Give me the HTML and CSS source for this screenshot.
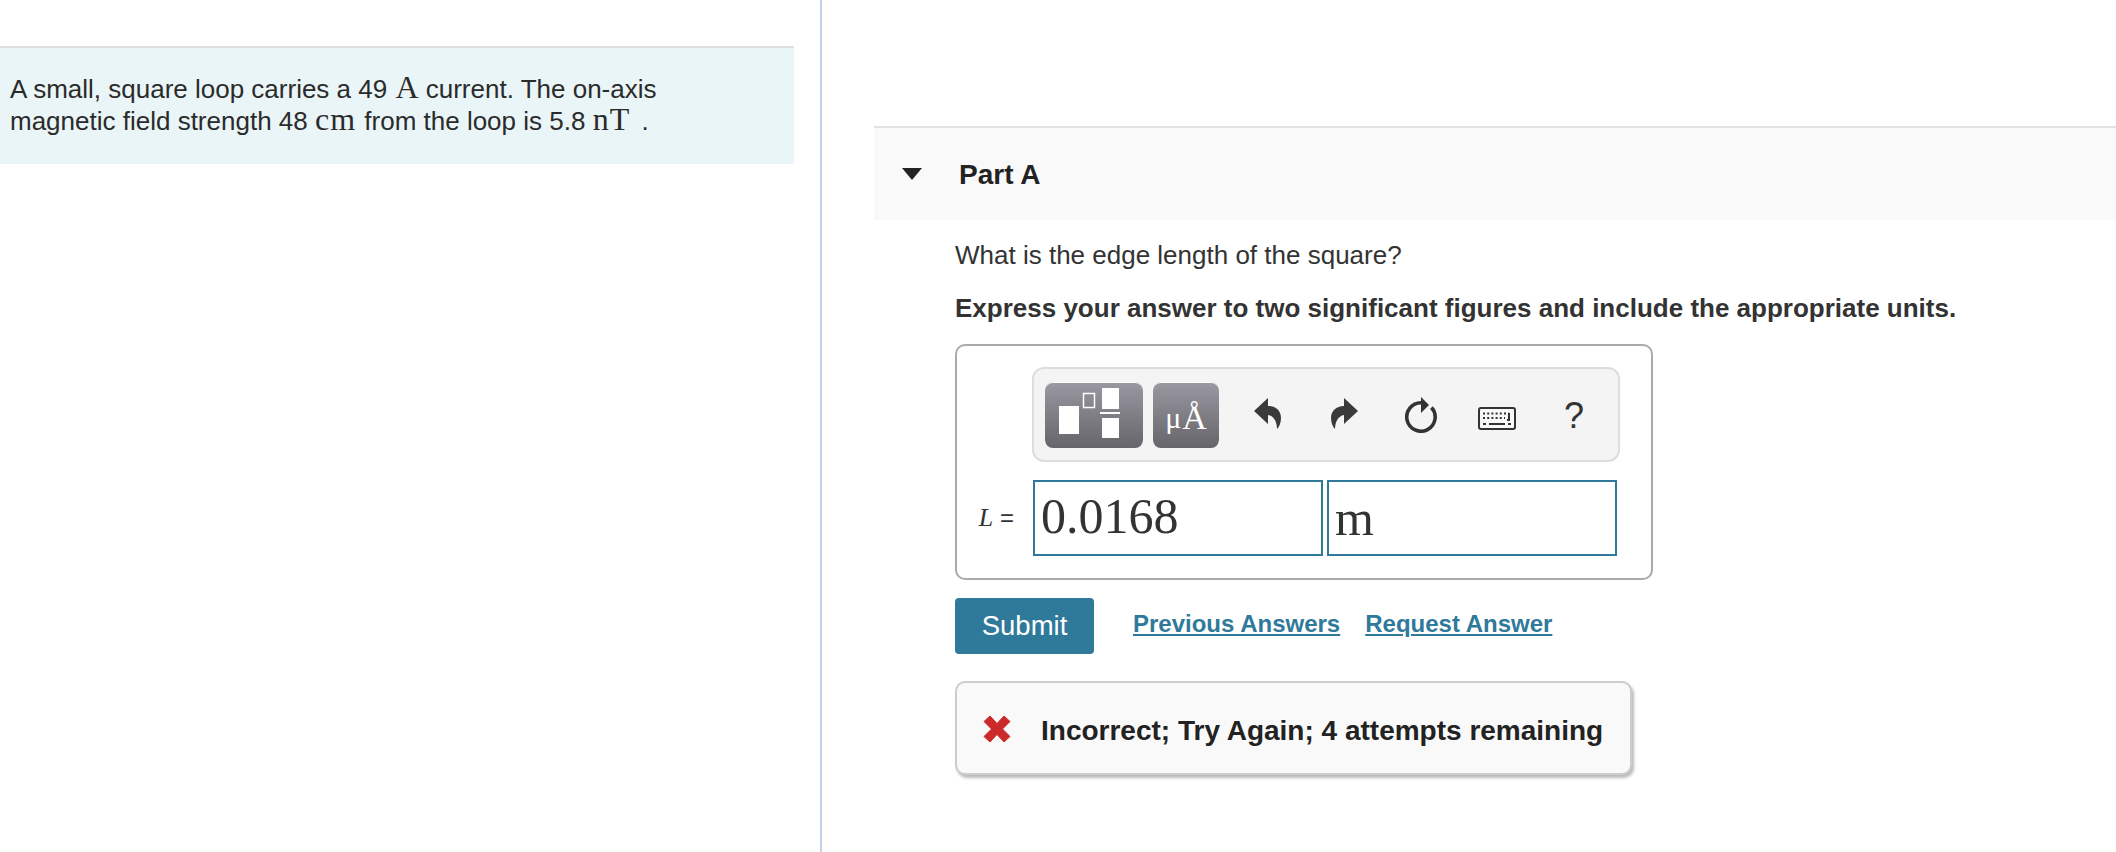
FILE: index.html
```html
<!DOCTYPE html>
<html lang="en">
<head>
  <meta charset="UTF-8">
  <title>Part A</title>
  <link rel="stylesheet" href="styles.css">
</head>
<body>

<div class="page">
  <div class="left-pane">
    <div class="intro">
      A small, square loop carries a 49 <span class="math math-a">A</span> current. The on-axis<br>
      magnetic field strength 48 <span class="math math-cm">cm</span> from the loop is 5.8 <span class="math math-nt">nT</span> .
    </div>
  </div>

  <div class="right-pane">
    <div class="part-head">
      <span class="caret"></span>
      <h2>Part A</h2>
    </div>

    <div class="part-body">
      <p class="question">What is the edge length of the square?</p>
      <p class="instruct">Express your answer to two significant figures and include the appropriate units.</p>

      <div class="answer-box">
        <div class="toolbar">
          <div class="tool-btn tool-templates">
            <svg width="98" height="66" viewBox="0 0 98 66">
              <rect x="14" y="24" width="20" height="28" fill="#fff"/>
              <rect x="38.5" y="11.5" width="11" height="14" fill="none" stroke="#fff" stroke-width="1.5"/>
              <rect x="57" y="6" width="17" height="21" fill="#fff"/>
              <rect x="55" y="30" width="20" height="2" fill="#fff"/>
              <rect x="57" y="36" width="17" height="20" fill="#fff"/>
            </svg>
          </div>
          <div class="tool-btn tool-units"><span class="mu">μ</span>Å</div>
          <svg class="ico ico-undo" width="27" height="31" viewBox="0 0 27 31">
            <path d="M0 13 L14 0 V8 C22 8 27 13 27 20 C27 25 25 29 23 31 C23 24 20 18 14 17 V26 Z" fill="#3a3a3a"/>
          </svg>
          <svg class="ico ico-redo" width="27" height="31" viewBox="0 0 27 31">
            <path d="M27 13 L13 0 V8 C5 8 0 13 0 20 C0 25 2 29 4 31 C4 24 7 18 13 17 V26 Z" fill="#3a3a3a"/>
          </svg>
          <svg class="ico ico-reset" width="32" height="36" viewBox="0 0 32 36">
            <path d="M16 5.8 A14.2 14.2 0 1 0 26.5 10.5" fill="none" stroke="#333" stroke-width="3.6"/>
            <path d="M16 0 L24 8 L16 16 Z" fill="#333"/>
          </svg>
          <svg class="ico ico-keys" width="38" height="23" viewBox="0 0 38 23">
            <rect x="1" y="1" width="36" height="21" rx="2" fill="#f8f8f8" stroke="#333" stroke-width="2"/>
            <path d="M5 6.5H31" stroke="#333" stroke-width="2" stroke-dasharray="2 2.2"/>
            <path d="M5 11H27" stroke="#333" stroke-width="2" stroke-dasharray="2 2.2"/>
            <path d="M31 6V13H29" fill="none" stroke="#333" stroke-width="2"/>
            <path d="M5 17H8M11 17H27M30 17H33" stroke="#333" stroke-width="2"/>
          </svg>
          <span class="ico-help">?</span>
        </div>

        <div class="entry-row">
          <span class="var-label"><i>L</i> =</span>
          <div class="entry">0.0168</div>
          <div class="entry entry-unit">m</div>
        </div>
      </div>

      <div class="actions">
        <button class="submit">Submit</button>
        <a href="#" class="action-link first">Previous Answers</a>
        <a href="#" class="action-link">Request Answer</a>
      </div>

      <div class="feedback">
        <svg width="28" height="28" viewBox="0 0 28 28">
          <path d="M7 1 L14 8.5 L21 1 L27 6.5 L19.5 14 L27 21.5 L21 27 L14 19.5 L7 27 L1 21.5 L8.5 14 L1 6.5 Z" fill="#cc2a2a" stroke="#cc2a2a" stroke-linejoin="round"/>
        </svg>
        <span>Incorrect; Try Again; 4 attempts remaining</span>
      </div>
    </div>
  </div>
</div>

</body>
</html>
```

FILE: styles.css
```css
* {
  margin: 0;
  padding: 0;
  box-sizing: border-box;
}

html, body {
  height: 100%;
  background: white;
  color: #333;
  font-family: "Liberation Sans", Arial, sans-serif;
  overflow: hidden;
}

.page {
  display: flex;
  height: 852px;
}

.left-pane {
  width: 822px;
  flex-shrink: 0;
  padding-top: 46px;
  border-right: 2px solid #c3d1e6;
}

.intro {
  width: 794px;
  background: #e9f5f7;
  border-top: 2px solid #e0e0e0;
  padding: 25px 0 27px 10px;
  font-size: 26px;
  line-height: 32px;
  color: #2b2b2b;
}

.math {
  font-family: "Liberation Serif", serif;
  font-size: 32px;
  line-height: 0;
}

.math-a {
  margin-left: 1px;
}

.math-cm {
  letter-spacing: 1px;
  margin-right: 1px;
}

.math-nt {
  letter-spacing: 1px;
  margin-right: 4px;
}

.right-pane {
  flex: 1;
  padding: 126px 0 0 52px;
}

.part-head {
  height: 94px;
  display: flex;
  align-items: center;
  background: #f9f9f9;
  border-top: 2px solid #e2e2e2;
  padding-left: 28px;
}

.caret {
  width: 0;
  height: 0;
  border-left: 10px solid transparent;
  border-right: 10px solid transparent;
  border-top: 12px solid #222;
  margin-right: 37px;
}

.part-head h2 {
  font-size: 28px;
  margin-top: 2px;
  color: #222;
}

.part-body {
  padding: 19px 0 0 81px;
}

.question,
.instruct {
  font-size: 26px;
  line-height: 32px;
}

.instruct {
  font-weight: bold;
  margin-top: 21px;
}

.answer-box {
  width: 698px;
  height: 236px;
  margin-top: 20px;
  padding: 21px 0 0 75px;
  border: 2px solid #aaa;
  border-radius: 10px;
}

.toolbar {
  width: 588px;
  height: 95px;
  display: flex;
  align-items: center;
  background: #f4f4f4;
  border: 2px solid #ddd;
  border-radius: 12px;
  padding-left: 11px;
}

.tool-btn {
  height: 66px;
  border-radius: 8px;
  background: linear-gradient(#9a98a1, #65656a);
  box-shadow: inset 0 1px 0 #fff;
  flex-shrink: 0;
}

.tool-templates {
  width: 98px;
}

.tool-units {
  width: 66px;
  margin-left: 10px;
  display: flex;
  justify-content: center;
  align-items: flex-end;
  color: white;
  font-family: "Liberation Serif", serif;
  font-size: 34px;
  line-height: 26px;
  padding-bottom: 17px;
}

.mu {
  font-size: 30px;
  margin-right: 1px;
}

.ico {
  flex-shrink: 0;
}

.ico-undo {
  margin-left: 35px;
  margin-bottom: 2px;
}

.ico-redo {
  margin-left: 50px;
  margin-bottom: 2px;
}

.ico-reset {
  margin-left: 47px;
  margin-top: 1px;
}

.ico-keys {
  margin-left: 41px;
  margin-top: 8px;
}

.ico-help {
  margin-left: 48px;
  font-size: 36px;
  line-height: 40px;
  margin-top: 2px;
}

.entry-row {
  display: flex;
  align-items: center;
  margin-top: 18px;
  margin-left: -55px;
}

.var-label {
  width: 56px;
  padding-right: 19px;
  text-align: right;
  white-space: nowrap;
  font-size: 24px;
}

.var-label i {
  font-family: "Liberation Serif", serif;
  font-size: 26px;
}

.entry {
  width: 290px;
  height: 76px;
  border: 2px solid #2f7a9a;
  padding-left: 6px;
  font-family: "Liberation Serif", serif;
  font-size: 50px;
  line-height: 69px;
  color: #333;
}

.entry-unit {
  margin-left: 4px;
  line-height: 72px;
}

.actions {
  display: flex;
  align-items: center;
  margin-top: 18px;
}

.submit {
  width: 139px;
  height: 56px;
  background: #2f7a9a;
  border: none;
  border-radius: 4px;
  color: white;
  font-family: "Liberation Sans", sans-serif;
  font-size: 27.5px;
}

.action-link {
  font-size: 24px;
  font-weight: bold;
  color: #2f7a9a;
  margin-left: 25px;
  margin-top: -4px;
}

.action-link.first {
  margin-left: 39px;
}

.feedback {
  width: 677px;
  height: 94px;
  margin-top: 27px;
  display: flex;
  align-items: center;
  background: #f9f9f9;
  border: 2px solid #ccc;
  border-radius: 10px;
  box-shadow: 2px 3px 3px #bbb;
  padding-left: 26px;
  padding-top: 2px;
  color: #222;
}

.feedback span {
  margin-left: 30px;
  margin-top: 3px;
  font-size: 28px;
  font-weight: bold;
}
```
